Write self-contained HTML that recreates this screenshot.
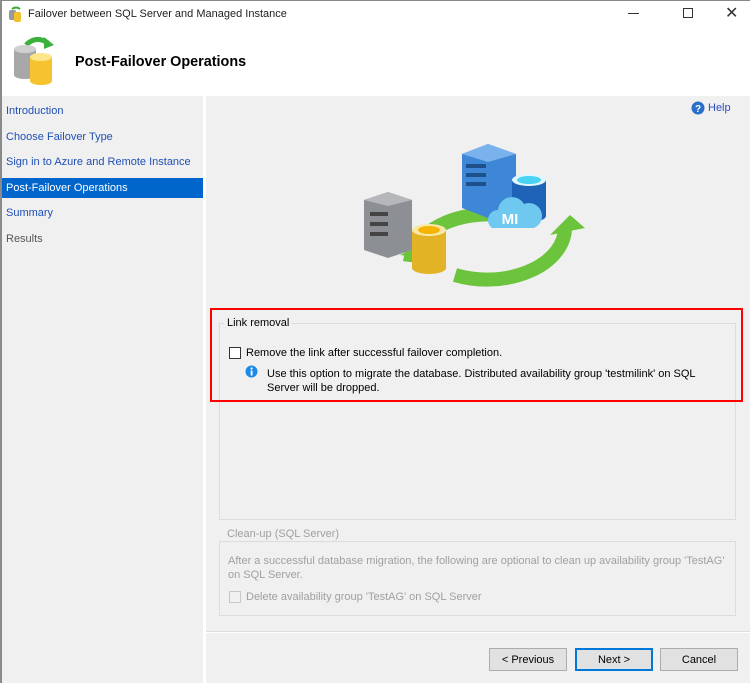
<!DOCTYPE html>
<html><head><meta charset="utf-8"><style>
*{margin:0;padding:0;box-sizing:border-box}
body{width:750px;height:683px;overflow:hidden;background:#f0f0f0;font-family:"Liberation Sans",sans-serif;font-size:11px;color:#000;position:relative}
.abs{position:absolute}
.nav{position:absolute;left:6px;color:#1f4fb5;font-size:11px}
.btn{position:absolute;top:648px;width:78px;height:23px;border:1px solid #adadad;background:#e1e1e1;text-align:center;line-height:23px;font-size:11px}
.grp{position:absolute;border:1px solid #dcdcdc}
.leg{position:absolute;background:#f0f0f0;padding:0 3px;font-size:11px}
</style></head><body>
<div class="abs" style="left:0;top:0;width:750px;height:96px;background:#fff;border-top:1px solid #888"></div>
<div class="abs" style="left:0;top:0;width:2px;height:683px;background:#8a8a8a"></div>
<svg class="abs" style="left:9px;top:6px" width="14" height="16"><rect x="0" y="4" width="7" height="10" rx="2" fill="#999"/><rect x="5" y="6" width="7" height="10" rx="2" fill="#f2c12e"/><path d="M3 3 Q7 0 11 3" stroke="#3a3" stroke-width="2" fill="none"/></svg>
<div class="abs" style="left:28px;top:8px;font-size:11px;color:#222">Failover between SQL Server and Managed Instance</div>
<div class="abs" style="left:628px;top:13px;width:11px;height:1px;background:#333"></div>
<div class="abs" style="left:683px;top:8px;width:10px;height:10px;border:1px solid #333"></div>
<div class="abs" style="left:725px;top:3px;font-size:16px;color:#333">✕</div>
<svg class="abs" style="left:10px;top:33px" width="50" height="56">
<path d="M16 12 Q26 2 38 10" stroke="#3cb03c" stroke-width="5" fill="none"/><path d="M34 4 L44 12 L34 16Z" fill="#3cb03c"/>
<path d="M4 16 h22 v26 a11 4 0 0 1 -22 0z" fill="#a8a8a8"/><ellipse cx="15" cy="16" rx="11" ry="4" fill="#d0d0d0"/>
<path d="M20 24 h22 v24 a11 4 0 0 1 -22 0z" fill="#f5c330"/><ellipse cx="31" cy="24" rx="11" ry="4" fill="#fde58a"/>
</svg>
<div class="abs" style="left:75px;top:54px;font-size:14.4px;font-weight:bold">Post-Failover Operations</div>
<div class="abs" style="left:2px;top:96px;width:201px;height:587px;background:#f0f0f0"></div>
<div class="abs" style="left:203px;top:96px;width:3px;height:587px;background:#fff"></div>
<div class="abs" style="left:2px;top:178px;width:201px;height:20px;background:#0066cc"></div>
<div class="nav" style="top:105px">Introduction</div>
<div class="nav" style="top:131px">Choose Failover Type</div>
<div class="nav" style="top:156px">Sign in to Azure and Remote Instance</div>
<div class="nav" style="top:182px;color:#fff">Post-Failover Operations</div>
<div class="nav" style="top:207px">Summary</div>
<div class="nav" style="top:233px;color:#555">Results</div>
<svg class="abs" style="left:691px;top:101px" width="14" height="14"><circle cx="7" cy="7" r="6.5" fill="#2a6fc9"/><text x="7" y="11" font-size="10" font-weight="bold" fill="#fff" text-anchor="middle" font-family="Liberation Sans">?</text></svg>
<div class="abs" style="left:708px;top:102px;color:#2a4fc0">Help</div>
<svg class="abs" style="left:350px;top:140px" width="240" height="150">
<path d="M60 122 A78 52 0 0 1 150 75" stroke="#6cc33c" stroke-width="14" fill="none"/>
<path d="M215 88 A78 52 0 0 1 105 135" stroke="#6cc33c" stroke-width="14" fill="none"/>
<path d="M200 95 L235 88 L220 75Z" fill="#6cc33c"/>
<path d="M50 115 L90 120 L70 105Z" fill="#6cc33c"/>
<path d="M14 60 L38 52 L62 60 V110 L38 118 L14 110Z" fill="#8c8f93"/><path d="M14 60 L38 52 L62 60 L38 66Z" fill="#b5b7ba"/>
<g fill="#444"><rect x="20" y="72" width="18" height="4"/><rect x="20" y="82" width="18" height="4"/><rect x="20" y="92" width="18" height="4"/></g>
<path d="M62 90 h34 v38 a17 6 0 0 1 -34 0z" fill="#e2b324"/><ellipse cx="79" cy="90" rx="17" ry="6" fill="#f8e9a8"/><ellipse cx="79" cy="90" rx="11" ry="4" fill="#f4b400"/>
<path d="M112 14 L138 4 L166 14 V68 L138 78 L112 68Z" fill="#3e87d6"/><path d="M112 14 L138 4 L166 14 L138 22Z" fill="#79b2ec"/>
<g fill="#1d4f8a"><rect x="116" y="24" width="20" height="4"/><rect x="116" y="33" width="20" height="4"/><rect x="116" y="42" width="20" height="4"/></g>
<path d="M162 40 h34 v36 a17 6 0 0 1 -34 0z" fill="#1e63b8"/><ellipse cx="179" cy="40" rx="17" ry="6" fill="#e0f6ff"/><ellipse cx="179" cy="40" rx="12" ry="4" fill="#49d2f2"/>
<path d="M142 88 a10 10 0 0 1 6 -18 a14 14 0 0 1 26 -6 a10 10 0 0 1 10 24z" fill="#6fc8f0"/>
<text x="160" y="84" font-size="15" font-weight="bold" fill="#fff" text-anchor="middle" font-family="Liberation Sans">MI</text>
</svg>
<div class="grp" style="left:219px;top:323px;width:517px;height:197px"></div>
<div class="leg" style="left:224px;top:317px">Link removal</div>
<div class="abs" style="left:229px;top:347px;width:12px;height:12px;border:1px solid #333;background:#fff"></div>
<div class="abs" style="left:246px;top:347px">Remove the link after successful failover completion.</div>
<svg class="abs" style="left:245px;top:365px" width="13" height="13"><circle cx="6.5" cy="6.5" r="6" fill="#1c8ae6"/><rect x="5.7" y="5.5" width="1.8" height="5" fill="#fff"/><circle cx="6.6" cy="3.5" r="1.1" fill="#fff"/></svg>
<div class="abs" style="left:267px;top:367px;width:450px;line-height:14px">Use this option to migrate the database. Distributed availability group 'testmilink' on SQL Server will be dropped.</div>
<div class="abs" style="left:210px;top:308px;width:533px;height:94px;border:2px solid #f00"></div>
<div class="grp" style="left:219px;top:541px;width:517px;height:75px"></div>
<div class="leg" style="left:224px;top:528px;color:#a0a0a0">Clean-up (SQL Server)</div>
<div class="abs" style="left:228px;top:554px;color:#a0a0a0;width:500px;line-height:14px">After a successful database migration, the following are optional to clean up availability group 'TestAG' on SQL Server.</div>
<div class="abs" style="left:229px;top:591px;width:12px;height:12px;border:1px solid #c8c8c8"></div>
<div class="abs" style="left:246px;top:591px;color:#a0a0a0">Delete availability group 'TestAG' on SQL Server</div>
<div class="abs" style="left:206px;top:631px;width:544px;height:1px;background:#dcdcdc"></div>
<div class="abs" style="left:206px;top:632px;width:544px;height:1px;background:#fff"></div>
<div class="btn" style="left:489px">&lt; Previous</div>
<div class="btn" style="left:575px;border:2px solid #0078d7;line-height:21px">Next &gt;</div>
<div class="btn" style="left:660px">Cancel</div>
</body></html>
